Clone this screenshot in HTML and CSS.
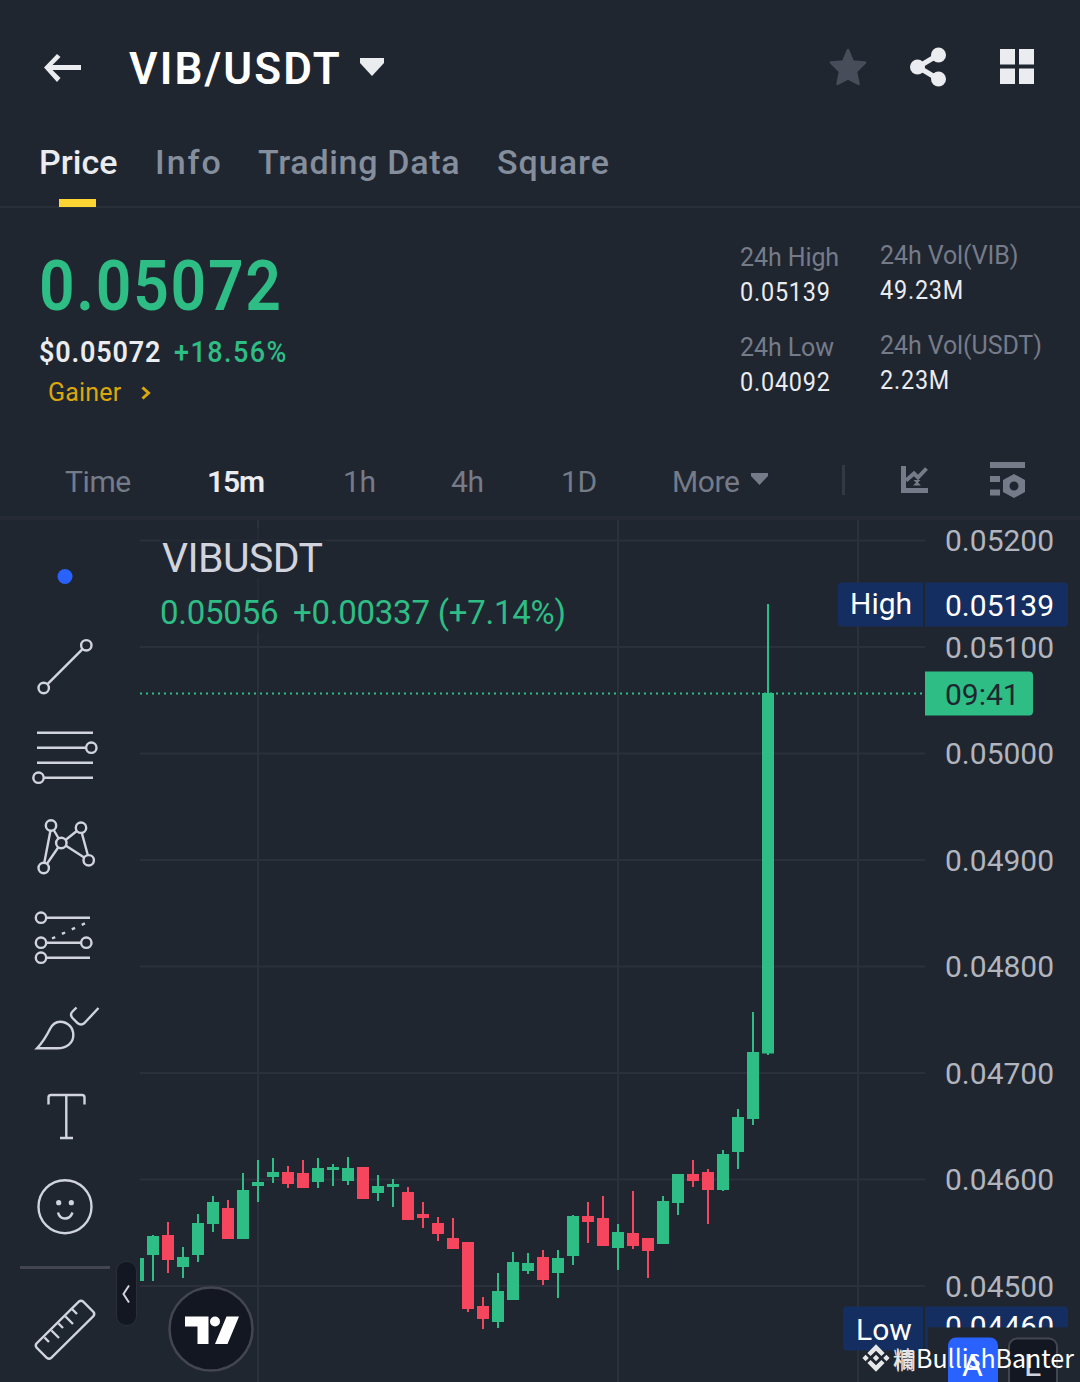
FILE: index.html
```html
<!DOCTYPE html>
<html lang="en">
<head>
  <meta charset="UTF-8">
  <title>VIB/USDT</title>
  <link rel="stylesheet" href="styles.css">
</head>
<body>

  <header class="header">
    <svg class="back" width="38" height="30" viewBox="0 0 38 30"><path d="M0 14.500L13 1l3.500 3-8 8H37v5H8.500l8 8-3.500 4z"/></svg>
    <h1 class="pair">VIB/USDT</h1>
    <svg class="caret" width="24" height="18" viewBox="0 0 24 18"><path d="M0 0h24v5L12 18 0 5z"/></svg>
    <div class="actions">
      <svg class="star" width="38" height="38" viewBox="0 0 38 38"><path d="M19 2l4.800 11.500L36 14.500l-9 9L29.500 36 19 30.500 8.500 36 11 23.500l-9-9 12.200-1z"/></svg>
      <svg class="share" width="36" height="40" viewBox="0 0 36 40"><path d="M28 8L8 20l20 12" fill="none" stroke="#eaecef" stroke-width="5"/><circle cx="28.500" cy="8" r="7.500"/><circle cx="7.500" cy="20" r="7.500"/><circle cx="28.500" cy="32" r="7.500"/></svg>
      <svg class="grid" width="34" height="35" viewBox="0 0 34 35"><path d="M0 0h15v15.500H0zM19 0h15v15.500H19zM0 19.500h15V35H0zM19 19.500h15V35H19z"/></svg>
    </div>
  </header>

  <nav class="tabs">
    <a class="tab active">Price</a>
    <a class="tab info">Info</a>
    <a class="tab data">Trading Data</a>
    <a class="tab square">Square</a>
  </nav>

  <section class="ticker">
    <div class="quote">
      <div class="last">0.05072</div>
      <div class="sub">
        <span class="usd">$0.05072</span>
        <span class="change">+18.56%</span>
      </div>
      <div class="gainer">
        <span class="gainer-text">Gainer</span>
        <svg width="10" height="14" viewBox="0 0 10 14"><path d="M1.500 1.500L7.500 7l-6 5.500" fill="none" stroke="#dca70c" stroke-width="3"/></svg>
      </div>
    </div>
    <div class="stats">
      <div class="stat-col">
        <div class="label">24h High</div>
        <div class="value">0.05139</div>
        <div class="label">24h Low</div>
        <div class="value">0.04092</div>
      </div>
      <div class="stat-col raised">
        <div class="label">24h Vol(VIB)</div>
        <div class="value">49.23M</div>
        <div class="label">24h Vol(USDT)</div>
        <div class="value">2.23M</div>
      </div>
    </div>
  </section>

  <div class="intervals">
    <span class="time">Time</span>
    <span class="m15 selected">15m</span>
    <span class="h1">1h</span>
    <span class="h4">4h</span>
    <span class="d1">1D</span>
    <span class="more">More</span>
    <svg class="more-caret" width="17" height="12" viewBox="0 0 17 12"><path d="M0 0h17v3L8.500 12 0 3z"/></svg>
    <i class="divider"></i>
    <svg class="indicator" width="28" height="28" viewBox="0 0 28 28"><path d="M0 0h5v22h22v5H0z"/><path d="M5 14.500l8-7 4 4L25.500 2.500" fill="none" stroke="#757b88" stroke-width="4"/><path d="M12.500 14h7l-2.500 2.500 3 3h-8l3-3z"/></svg>
    <svg class="settings" width="35" height="37" viewBox="0 0 35 37"><path d="M0 0h35v6H0zM0 14h10v6H0zM0 27.500h10v6H0z"/><path fill-rule="evenodd" d="M24 12l11 6v12l-11 6-11-6V18zM24 19.500a4.500 4.500 0 1 0 0 9 4.500 4.500 0 0 0 0-9z"/></svg>
  </div>

  <main class="chart">
    <aside class="toolbar">
      <svg viewBox="0 0 90 90"><circle class="dot" cx="45" cy="44.500" r="7.500"/></svg>
      <svg viewBox="0 0 90 90"><path d="M27.500 62.200L62.500 27.100"/><circle cx="23.700" cy="66" r="5.200"/><circle cx="66.300" cy="23.300" r="5.200"/></svg>
      <svg viewBox="0 0 90 90"><path d="M17 20.700h56M17 35.700h49M17 50.700h56M24 65.700h49"/><circle cx="71.300" cy="35.700" r="5.200"/><circle cx="18.500" cy="65.700" r="5.200"/></svg>
      <svg viewBox="0 0 90 90"><path d="M33.700 28l5 8.500M45.500 38l11.300-9M61.800 31l6 22M46 43.700l18.200 11.800M27 61.700l11.300-16.400M24.300 60.700L30.400 29"/><circle cx="31" cy="23.500" r="5.200"/><circle cx="61" cy="25.700" r="5.200"/><circle cx="41.300" cy="41" r="5.200"/><circle cx="23.700" cy="66" r="5.200"/><circle cx="68.700" cy="58.300" r="5.200"/></svg>
      <svg viewBox="0 0 90 90"><path d="M26 25.700h44M26 50.700h35M26 65.700h44"/><path d="M32 46.500L68 30" stroke-dasharray="3.500 7.400"/><circle cx="21" cy="25.700" r="5.200"/><circle cx="21" cy="50.700" r="5.200"/><circle cx="66.300" cy="50.700" r="5.200"/><circle cx="21" cy="65.700" r="5.200"/></svg>
      <svg viewBox="0 0 90 90"><path d="M17 66.300C24 59 27 53 30 47c2.500-5 6-7.300 10-7.300 8 0 13.300 6 13.300 13.300 0 8-6.500 13.300-16 13.300z"/><path d="M56.500 25.500l-4 4q-3 3 0 6.500l5 5q3.500 3 7 0l14-15"/></svg>
      <svg viewBox="0 0 90 90"><path d="M28.500 32.500v-7Q28.500 23 31 23h31q2.500 0 2.500 2.500v7M46.300 23v43M40 66h13"/></svg>
      <svg viewBox="0 0 90 90"><circle cx="45" cy="44.700" r="26.500"/><circle class="eye" cx="38.700" cy="40.700" r="2.600"/><circle class="eye" cx="51.300" cy="40.700" r="2.600"/><path d="M38 50.500q1.500 6 7 6t7.500-6"/></svg>
      <hr class="tool-line">
      <svg viewBox="0 0 90 90"><path d="M59 17.500q2-1.500 4 0L73.500 28q1.500 2 0 4L31 74q-2 1.500-4 0L16.500 63.500q-1.500-2 0-4zM24.500 53.500l4.500 4.500M31.500 46.500l7.500 7.500M38.500 39.500l4.500 4.500M45.500 32.500l7.500 7.500M52.500 25.500l4.500 4.500"/></svg>
    </aside>

    <svg class="plot" width="940" height="862" viewBox="140 520 940 862">
      <g id="grid"></g>
      <g id="candles"></g>
      <path class="price-line" d="M140 693.500H923"/>

      <rect class="legend-bg" x="160" y="541.800" width="166" height="36"/>
      <rect class="legend-shade" x="160" y="528" width="166" height="105"/>
      <text class="symbol" x="162" y="571.500">VIBUSDT</text>
      <text class="ohlc" x="160" y="623.500">0.05056</text>
      <text class="ohlc" x="293" y="623.500">+0.00337 (+7.14%)</text>

      <g id="axis"></g>

      <path class="tag" d="M842 582.500h81v44h-81q-4 0-4-4v-36q0-4 4-4zM925 582.500h139q4 0 4 4v36q0 4-4 4H925z"/>
      <text class="tag-text" x="850" y="613.500">High</text>
      <text class="tag-text" x="945" y="615.500">0.05139</text>

      <path class="countdown" d="M925 671.500h104q4 0 4 4v36q0 4-4 4H925z"/>
      <text class="countdown-text" x="945" y="704.500">09:41</text>

      <path class="tag" d="M847 1306.500h76v44h-76q-4 0-4-4v-36q0-4 4-4zM925 1306.500h139q4 0 4 4v17H928v23h-3z"/>
      <text class="tag-text" x="856" y="1339.500">Low</text>
      <text class="tag-text" x="945" y="1336.500">0.04460</text>
      <path class="cover" d="M928 1327.500h152V1382H928z"/>

      <rect class="auto" x="948" y="1337.500" width="50" height="60" rx="8"/>
      <text class="scale-text" x="962" y="1376">A</text>
      <rect class="log" x="1009" y="1338.500" width="48" height="60" rx="8"/>
      <text class="scale-text log-text" x="1024" y="1376">L</text>

      <circle class="tv" cx="211" cy="1329" r="41.500"/>
      <path class="tv-mark" d="M185 1316.500h23.500V1344h-11v-17.500H185zM226.500 1316.500H239L227.500 1344H215z"/>
      <circle class="tv-mark" cx="215" cy="1321.500" r="5"/>

      <g class="watermark">
        <path d="M876 1344.300l8.600 8.600-3.200 3.200-5.400-5.400-5.400 5.400-3.200-3.200zM876 1371.700l8.600-8.600-3.200-3.200-5.400 5.400-5.400-5.400-3.200 3.200zM876 1354.800l3.200 3.200-3.200 3.200-3.200-3.200zM865.600 1354.800l3.200 3.200-3.200 3.200-3.200-3.200zM886.400 1354.800l3.200 3.200-3.200 3.200-3.200-3.200z"/>
        <text class="cjk" x="893" y="1367">精</text>
        <text class="cjk" x="894" y="1369">欄</text>
        <text class="handle" x="916" y="1367.500">BullishBanter</text>
      </g>
    </svg>

    <div class="collapse"><svg width="10" height="20" viewBox="0 0 10 20"><path d="M8 1.500L2.500 10 8 18.500" fill="none" stroke="#d1d4dc" stroke-width="2"/></svg></div>
  </main>

  <script src="chart.js"></script>
</body>
</html>
```

FILE: styles.css
```css
* {
  box-sizing: border-box;
}
body {
  margin: 0;
  width: 1080px;
  height: 1382px;
  overflow: hidden;
  background: #202630;
  color: #eaecef;
  font-family: Roboto, sans-serif;
}
svg {
  display: block;
  flex: none;
}
span, a, .label, .value, .pair, .last {
  white-space: nowrap;
}

/* header */
.header {
  display: flex;
  align-items: center;
  height: 135px;
  padding: 0 46px 0 44px;
  fill: #eaecef;
}
.pair {
  margin: 3px 0 0 47px;
  width: 212px;
  font-size: 44px;
  font-weight: 600;
  letter-spacing: 2.1px;
  color: #fff;
}
.caret {
  margin: -2px 0 0 19px;
}
.actions {
  display: flex;
  align-items: center;
  margin: -2px 0 0 auto;
}
.star {
  margin-top: 1px;
  fill: #474d59;
  stroke: #474d59;
  stroke-width: 2.5;
  stroke-linejoin: round;
}
.share {
  margin-left: 43px;
}
.grid {
  margin-left: 54px;
}

/* tabs */
.tabs {
  display: flex;
  height: 73px;
  padding: 7px 0 0 39px;
  border-bottom: 2px solid #2a3039;
}
.tab {
  position: relative;
  font-size: 34px;
  line-height: 40px;
  font-weight: 500;
  color: #848e9c;
}
.tab.active {
  width: 116px;
  color: #eaecef;
}
.tab.active::after {
  content: "";
  position: absolute;
  left: 20px;
  top: 57px;
  width: 37px;
  height: 8px;
  background: #fcd535;
}
.info {
  width: 103px;
  letter-spacing: 2px;
}
.data {
  width: 239px;
  letter-spacing: 0.7px;
}
.square {
  letter-spacing: 1px;
}

/* ticker */
.ticker {
  display: flex;
  justify-content: space-between;
  height: 237px;
  padding: 0 0 0 39px;
}
.last {
  margin-top: 36px;
  width: 240px;
  font-size: 71px;
  line-height: 84px;
  font-weight: 600;
  letter-spacing: 1.9px;
  color: #2ebd85;
  transform: scaleX(0.88);
  transform-origin: 0 0;
}
.sub {
  display: flex;
  margin-top: 6px;
  font-size: 30px;
  line-height: 36px;
}
.usd, .change {
  font-weight: 600;
  letter-spacing: 0.9px;
  transform: scaleX(0.9);
  transform-origin: 0 0;
}
.usd {
  width: 135px;
}
.change {
  font-weight: 500;
  letter-spacing: 1.6px;
  color: #2ebd85;
}
.gainer {
  display: flex;
  align-items: center;
  gap: 20px;
  margin: 7px 0 0 9px;
  font-size: 25px;
  line-height: 30px;
  letter-spacing: 0.2px;
  color: #dca70c;
}
.gainer-text {
  padding-top: 1px;
}
.stats {
  display: flex;
  width: 340px;
  padding-top: 34px;
}
.stat-col {
  width: 140px;
}
.raised {
  margin-top: -2px;
  width: 200px;
}
.label {
  height: 30px;
  padding-top: 1px;
  font-size: 25px;
  line-height: 30px;
  letter-spacing: -0.1px;
  color: #757b88;
}
.value {
  margin: 5px 0 25px;
  font-size: 26px;
  line-height: 30px;
  letter-spacing: 0.9px;
  transform: scaleX(0.9);
  transform-origin: 0 0;
}

/* intervals */
.intervals {
  display: flex;
  align-items: center;
  height: 75px;
  padding-left: 65px;
  border-bottom: 4px solid #252a34;
  font-size: 30px;
  letter-spacing: -0.4px;
  color: #757b88;
  fill: #757b88;
}
.intervals span {
  padding-top: 1px;
}
.time {
  width: 142px;
}
.m15 {
  width: 136px;
}
.selected {
  font-weight: 600;
  letter-spacing: -1.2px;
  color: #eaecef;
}
.h1 {
  width: 108px;
}
.h4 {
  width: 110px;
}
.d1 {
  width: 111px;
}
.more {
  width: 79px;
}
.more-caret {
  margin-top: -3px;
}
.divider {
  width: 3px;
  height: 30px;
  margin: -2px 0 0 74px;
  background: #333944;
}
.indicator {
  margin: -2px 0 0 56px;
}
.settings {
  margin-left: 61px;
}

/* chart */
.chart {
  position: relative;
  display: flex;
  height: 862px;
}
.toolbar {
  width: 140px;
  padding: 12px 20px 0;
  fill: none;
  stroke: #d1d4dc;
  stroke-width: 2.4;
}
.toolbar svg {
  width: 90px;
  height: 90px;
}
.dot {
  fill: #2962ff;
  stroke: none;
}
.eye {
  fill: #d1d4dc;
  stroke: none;
}
.tool-line {
  width: 90px;
  height: 3px;
  margin: 14px 0 15px;
  border: 0;
  background: #434651;
}
.collapse {
  position: absolute;
  left: 116px;
  top: 741px;
  width: 21px;
  height: 65px;
  padding: 22px 0 0 4px;
  border: 1px solid #2a2e39;
  border-radius: 10px;
  background: #131722;
}
.grid-line {
  stroke: #2b303a;
  stroke-width: 2;
}
.up {
  fill: #2ebd85;
}
.down {
  fill: #f6465d;
}
.price-line {
  stroke: #2ebd85;
  stroke-width: 2;
  stroke-dasharray: 2 4;
}
.legend-bg, .cover {
  fill: #202630;
}
.legend-shade {
  fill: #202630;
  opacity: 0.5;
}
.symbol {
  font-size: 41px;
  letter-spacing: -0.6px;
  fill: #d1d4dc;
}
.ohlc {
  font-size: 33px;
  letter-spacing: -0.25px;
  fill: #2ebd85;
}
.axis-text {
  font-size: 30px;
  fill: #b2b5be;
}
.tag {
  fill: #152e61;
}
.tag-text {
  font-size: 30px;
  fill: #fff;
}
.countdown {
  fill: #2ebd85;
}
.countdown-text {
  font-size: 30px;
  fill: #202630;
}
.auto {
  fill: #2962ff;
}
.log {
  fill: #131722;
  stroke: #434651;
  stroke-width: 2;
}
.scale-text {
  font-size: 32px;
  fill: #fff;
}
.log-text {
  fill: #d1d4dc;
}
.tv {
  fill: #131722;
  stroke: #434651;
  stroke-width: 2.5;
}
.tv-mark {
  fill: #fff;
}
.watermark {
  fill: #e6e7e9;
}
.cjk {
  font: 22px "Noto Sans CJK SC", sans-serif;
}
.handle {
  font: 25px "Noto Sans CJK SC", sans-serif;
  fill: #fff;
}
```

FILE: chart.js
```javascript
// [high, body top, body bottom, low, up]
const candles = [
  [1258, 1258, 1281, 1281, 1], [1235, 1236, 1255, 1281, 1], [1222, 1235, 1260, 1273, 0],
  [1247, 1257, 1267, 1278, 1], [1214, 1223, 1255, 1262, 1], [1196, 1202, 1224, 1232, 1],
  [1200, 1208, 1239, 1239, 0], [1173, 1190, 1239, 1239, 1], [1160, 1182, 1186, 1202, 1],
  [1158, 1172, 1177, 1183, 1], [1166, 1172, 1184, 1188, 0], [1160, 1173, 1188, 1188, 0],
  [1158, 1168, 1182, 1188, 1], [1164, 1167, 1170, 1186, 1], [1157, 1168, 1181, 1185, 1],
  [1167, 1167, 1199, 1199, 0], [1175, 1186, 1193, 1201, 1], [1179, 1184, 1187, 1207, 1],
  [1187, 1192, 1220, 1220, 0], [1202, 1214, 1218, 1228, 0], [1217, 1223, 1234, 1241, 0],
  [1218, 1238, 1249, 1249, 0], [1242, 1242, 1309, 1312, 0], [1297, 1306, 1319, 1329, 0],
  [1273, 1291, 1322, 1328, 1], [1252, 1262, 1300, 1300, 1], [1253, 1263, 1271, 1274, 1],
  [1250, 1257, 1280, 1285, 0], [1250, 1258, 1273, 1298, 1], [1215, 1216, 1256, 1265, 1],
  [1202, 1216, 1222, 1243, 0], [1196, 1218, 1246, 1246, 0], [1224, 1232, 1248, 1270, 1],
  [1191, 1233, 1246, 1249, 0], [1238, 1238, 1251, 1278, 0], [1196, 1201, 1244, 1244, 1],
  [1174, 1174, 1203, 1215, 1], [1160, 1174, 1181, 1187, 0], [1169, 1172, 1190, 1224, 0],
  [1150, 1154, 1190, 1191, 1], [1109, 1117, 1152, 1169, 1], [1012, 1052, 1119, 1125, 1],
  [604, 693, 1053.5, 1055, 1]
];

let bars = "";
candles.forEach(([high, top, bottom, low, up], i) => {
  const x = 138 + i * 15;
  bars += `<path class="${up ? "up" : "down"}" d="M${x - 1} ${high}h2V${low}h-2zM${x - 6} ${top}h12V${bottom}h-12z"/>`;
});
document.getElementById("candles").innerHTML = bars;

let lines = "";
let labels = "";
for (let i = 0; i < 8; i++) {
  const y = 540.5 + i * 106.5;
  lines += `<path class="grid-line" d="M140 ${y}H925"/>`;
  labels += `<text class="axis-text" x="945" y="${y + 10.9}">${(0.052 - i * 0.001).toFixed(5)}</text>`;
}
[258, 618, 858].forEach(x => {
  lines += `<path class="grid-line" d="M${x} 518V1382"/>`;
});
document.getElementById("grid").innerHTML = lines;
document.getElementById("axis").innerHTML = labels;
```
